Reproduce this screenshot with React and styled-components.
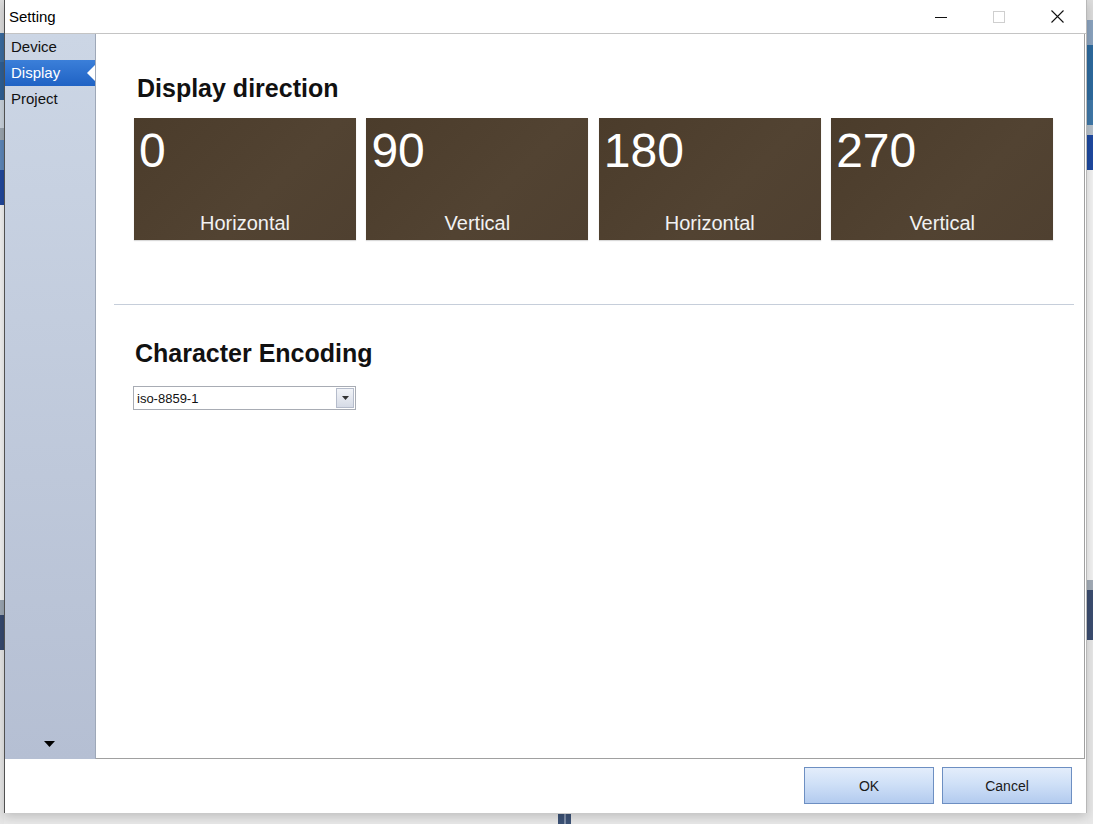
import React from "react";
import styled, { createGlobalStyle } from "styled-components";

const Global = createGlobalStyle`
  html, body { margin: 0; padding: 0; }
  body { font-family: "Liberation Sans", Arial, sans-serif; background: #ececec; }
  * { box-sizing: border-box; }
`;

const Desktop = styled.div`
  width: 1093px;
  height: 824px;
  overflow: hidden;
  background:
    linear-gradient(to bottom, #dcdcdc 0 33px, #3a6b9f 33px 62px, #2f5f94 62px 100px, #c9d2dc 100px 128px, #9aa4ae 128px 140px, #5d86b8 140px 170px, #21479b 170px 205px, #f2f2f2 205px 600px, #9ba6b2 600px 615px, #36496e 615px 650px, #e6e6e6 650px) left top / 4px 100% no-repeat,
    linear-gradient(to bottom, #dcdcdc 0 20px, #8aa3bf 20px 45px, #2d6a9e 45px 100px, #3f78a8 100px 125px, #b9c3cd 125px 135px, #1e49a0 135px 170px, #f3f3f3 170px 580px, #a3adb8 580px 590px, #3b4d70 590px 640px, #e8e8e8 640px) right top / 6px 100% no-repeat,
    linear-gradient(to right, transparent 558px, #3c5276 558px 564px, #7f8fa9 564px 566px, #3c5276 566px 571px, transparent 571px) left bottom / 100% 10px no-repeat,
    #e9e9e9;
  display: flex;
  align-items: flex-start;
`;

const Window = styled.div`
  margin-left: 4px;
  width: 1083px;
  height: 813px;
  background: #fff;
  border-left: 1px solid #505050;
  border-right: 1px solid #b8b8b8;
  box-shadow: 0 4px 10px rgba(0, 0, 0, 0.18);
  display: flex;
  flex-direction: column;
`;

const TitleBar = styled.div`
  height: 34px;
  flex: none;
  display: flex;
  align-items: center;
  border-bottom: 1px solid #c4c4c4;
  padding-left: 4px;
`;

const Title = styled.div`
  flex: 1;
  font-size: 15px;
  color: #000;
  padding-bottom: 1px;
`;

const CtrlButton = styled.div`
  width: 58px;
  height: 33px;
  display: flex;
  align-items: center;
  justify-content: center;
`;

const Body = styled.div`
  flex: 1;
  display: flex;
  min-height: 0;
`;

const Sidebar = styled.div`
  width: 91px;
  flex: none;
  background: linear-gradient(to bottom, #ccd6e5, #b5bfd3);
  border-right: 1px solid #9ea8b8;
  display: flex;
  flex-direction: column;
`;

const NavItem = styled.div`
  position: relative;
  height: 26px;
  display: flex;
  align-items: center;
  padding-left: 6px;
  padding-bottom: 1px;
  font-size: 15px;
  color: ${(p) => (p.$active ? "#fff" : "#111")};
  background: ${(p) =>
    p.$active ? "linear-gradient(to bottom, #3b7fd9, #1f62c4)" : "transparent"};
`;

const Pointer = styled.span`
  position: absolute;
  right: 0;
  top: 5px;
  width: 0;
  height: 0;
  border-top: 8px solid transparent;
  border-bottom: 8px solid transparent;
  border-right: 8px solid #fff;
`;

const SideSpacer = styled.div`
  flex: 1;
`;

const MoreArrow = styled.div`
  height: 26px;
  display: flex;
  justify-content: center;
  align-items: flex-start;
  padding-top: 8px;
  padding-right: 1px;
`;

const Content = styled.div`
  flex: 1;
  background: #fff;
  border-right: 1px solid #a0a0a0;
  border-bottom: 1px solid #a0a0a0;
  margin-right: 1px;
  display: flex;
  flex-direction: column;
`;

const Section = styled.section`
  padding-left: ${(p) => p.$left}px;
  padding-top: ${(p) => p.$top}px;
`;

const Heading = styled.h2`
  margin: 0;
  font-size: 25px;
  line-height: 28px;
  font-weight: bold;
  color: #111;
  padding-left: ${(p) => p.$indent || 0}px;
`;

const Tiles = styled.div`
  display: grid;
  grid-template-columns: repeat(4, 222px);
  column-gap: 10.4px;
  margin-top: 16px;
`;

const Tile = styled.div`
  height: 122px;
  background: linear-gradient(135deg, #4b3c2b 0%, #524332 60%, #4f4030 100%);
  color: #fff;
  display: flex;
  flex-direction: column;
  justify-content: space-between;
  padding: 6px 0 5px 0;
  box-shadow: 0 1px 1px rgba(0, 0, 0, 0.15);
`;

const TileNumber = styled.div`
  font-size: 48px;
  line-height: 54px;
  padding-left: 5px;
`;

const TileLabel = styled.div`
  font-size: 20px;
  line-height: 24px;
  text-align: center;
  color: #f2f2f2;
`;

const Divider = styled.hr`
  margin: 64px 10px 0 18px;
  border: none;
  border-top: 1px solid #c6ceda;
  height: 0;
`;

const Select = styled.div`
  margin-top: 19px;
  width: 223px;
  height: 24px;
  border: 1px solid #a8acb4;
  display: flex;
  align-items: center;
  padding: 0 1px 0 3px;
  background: #fff;
`;

const SelectText = styled.div`
  flex: 1;
  font-size: 13px;
  color: #111;
`;

const SelectButton = styled.div`
  width: 18px;
  height: 20px;
  border: 1px solid #b5bccb;
  background: linear-gradient(to bottom, #f2f4f8, #d6dbe6);
  display: flex;
  align-items: center;
  justify-content: center;
`;

const Footer = styled.div`
  height: 54px;
  flex: none;
  display: flex;
  justify-content: flex-end;
  align-items: flex-start;
  gap: 8px;
  padding: 8px 14px 0 0;
`;

const Button = styled.button`
  width: 130px;
  height: 37px;
  border: 1px solid #6d8fc2;
  background: linear-gradient(to bottom, #e3edfb 0%, #cfe0f7 45%, #b3cbef 100%);
  font-family: "Liberation Sans", Arial, sans-serif;
  font-size: 14px;
  color: #1a1a1a;
  padding: 0;
`;

const tiles = [
  { n: "0", label: "Horizontal" },
  { n: "90", label: "Vertical" },
  { n: "180", label: "Horizontal" },
  { n: "270", label: "Vertical" },
];

export default function App() {
  return (
    <>
      <Global />
      <Desktop>
        <Window>
          <TitleBar>
            <Title>Setting</Title>
            <CtrlButton>
              <svg width="12" height="12" viewBox="0 0 12 12">
                <path d="M0 6.5H12" stroke="#111" strokeWidth="1" />
              </svg>
            </CtrlButton>
            <CtrlButton>
              <svg width="12" height="12" viewBox="0 0 12 12">
                <rect x="0.5" y="0.5" width="11" height="11" fill="none" stroke="#cfcfcf" />
              </svg>
            </CtrlButton>
            <CtrlButton>
              <svg width="13" height="13" viewBox="0 0 13 13">
                <path d="M0.5 0.5L12.5 12.5M12.5 0.5L0.5 12.5" stroke="#111" strokeWidth="1.1" />
              </svg>
            </CtrlButton>
          </TitleBar>
          <Body>
            <Sidebar>
              <NavItem>Device</NavItem>
              <NavItem $active>
                Display
                <Pointer />
              </NavItem>
              <NavItem>Project</NavItem>
              <SideSpacer />
              <MoreArrow>
                <svg width="11" height="6" viewBox="0 0 11 6">
                  <path d="M0 0H11L5.5 6Z" fill="#000" />
                </svg>
              </MoreArrow>
            </Sidebar>
            <Content>
              <Section $left={38} $top={40}>
                <Heading $indent={3}>Display direction</Heading>
                <Tiles>
                  {tiles.map((t) => (
                    <Tile key={t.n}>
                      <TileNumber>{t.n}</TileNumber>
                      <TileLabel>{t.label}</TileLabel>
                    </Tile>
                  ))}
                </Tiles>
              </Section>
              <Divider />
              <Section $left={37} $top={34}>
                <Heading $indent={2}>Character Encoding</Heading>
                <Select>
                  <SelectText>iso-8859-1</SelectText>
                  <SelectButton>
                    <svg width="7" height="4" viewBox="0 0 7 4">
                      <path d="M0 0H7L3.5 4Z" fill="#333" />
                    </svg>
                  </SelectButton>
                </Select>
              </Section>
            </Content>
          </Body>
          <Footer>
            <Button>OK</Button>
            <Button>Cancel</Button>
          </Footer>
        </Window>
      </Desktop>
    </>
  );
}
